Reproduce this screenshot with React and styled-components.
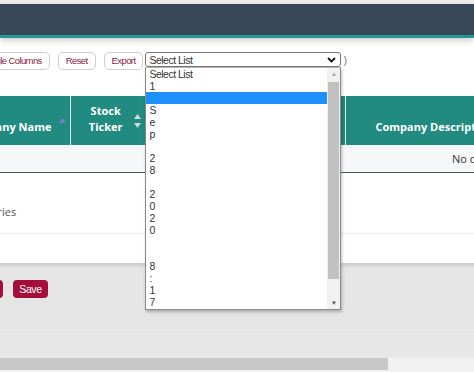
import styled, { createGlobalStyle } from "styled-components";

const GlobalStyle = createGlobalStyle`
  html, body {
    margin: 0;
    padding: 0;
    background: #e5e5e5;
  }
  * { box-sizing: border-box; }
`;

const sans = `"Liberation Sans", Arial, sans-serif`;

const options = ["Select List", "1", "", "S", "e", "p", "", "2", "8", "", "2", "0", "2", "0", "", "", "8", ":", "1", "7"];

function SortBoth() {
  return (
    <svg width="7" height="14" viewBox="0 0 7 14">
      <path d="M3.5 0 L7 5 L0 5 Z" fill="#c9dcda" />
      <path d="M3.5 14 L7 9 L0 9 Z" fill="#c9dcda" />
    </svg>
  );
}

function SortAsc() {
  return (
    <svg width="7" height="5" viewBox="0 0 7 5">
      <path d="M3.5 0 L7 5 L0 5 Z" fill="#7d7ad6" />
    </svg>
  );
}

function Chevron() {
  return (
    <svg width="9" height="6" viewBox="0 0 9 6">
      <path d="M1 1 L4.5 4.5 L8 1" fill="none" stroke="#111" strokeWidth="1.8" />
    </svg>
  );
}

function App() {
  return (
    <Page>
      <GlobalStyle />
      <TopStrip />
      <NavBar />
      <Main>
        <Card>
          <Toolbar>
            <ToolButton>Toggle Columns</ToolButton>
            <ToolButton>Reset</ToolButton>
            <ToolButton>Export</ToolButton>
            <SelectWrap>
              <SelectBox>
                <span>Select List</span>
                <Chevron />
              </SelectBox>
              <Popup>
                <OptionList>
                  {options.map((o, i) => (
                    <Option key={i} $active={i === 2}>{o}</Option>
                  ))}
                </OptionList>
                <PopScroll>
                  <ScrollArrow $dark={false}>▲</ScrollArrow>
                  <PopThumb />
                  <ScrollArrow $dark>▼</ScrollArrow>
                </PopScroll>
              </Popup>
            </SelectWrap>
            <Paren>)</Paren>
          </Toolbar>

          <Table>
            <colgroup>
              <col style={{ width: 150 }} />
              <col style={{ width: 75 }} />
              <col style={{ width: 200 }} />
              <col style={{ width: 215 }} />
            </colgroup>
            <thead>
              <tr>
                <Th>
                  <HeadInner $justify="flex-end" $gap={7}>
                    <HeadText>Company Name</HeadText>
                    <SortAsc />
                  </HeadInner>
                </Th>
                <Th>
                  <HeadInner $justify="flex-end" $gap={11}>
                    <HeadText>Stock<br />Ticker</HeadText>
                    <SortBoth />
                  </HeadInner>
                </Th>
                <Th>
                  <HeadInner $justify="center">
                    <HeadText>Sector</HeadText>
                  </HeadInner>
                </Th>
                <Th>
                  <HeadInner $justify="flex-start">
                    <HeadText>Company Description</HeadText>
                  </HeadInner>
                </Th>
              </tr>
            </thead>
            <tbody>
              <EmptyRow>
                <td />
                <td />
                <td />
                <Td $pad="0 0 0 107px">No description</Td>
              </EmptyRow>
              <DataRow>
                <Td $pad="0 0 0 45px" $valign="bottom">Industries</Td>
                <td />
                <td />
                <td />
              </DataRow>
            </tbody>
          </Table>
          <CardFoot />
        </Card>

        <Actions>
          <SaveButton>Cancel</SaveButton>
          <SaveButton>Save</SaveButton>
        </Actions>
        <Band />
      </Main>
      <HScroll>
        <HThumb />
      </HScroll>
    </Page>
  );
}

const Page = styled.div`
  width: 474px;
  height: 372px;
  overflow: hidden;
  display: flex;
  flex-direction: column;
  background: #e5e5e5;
  font-family: ${sans};
`;

const TopStrip = styled.div`
  height: 4px;
  background: #ececec;
`;

const NavBar = styled.div`
  height: 34px;
  background: #374759;
  border-bottom: 3px solid #27968e;
  box-shadow: 0 3px 6px rgba(0, 0, 0, 0.18);
  position: relative;
  z-index: 2;
`;

const Main = styled.div`
  flex: 1;
  margin-left: -80px;
  width: 660px;
  display: flex;
  flex-direction: column;
`;

const Card = styled.div`
  background: #fff;
  box-shadow: 0 2px 4px rgba(0, 0, 0, 0.15);
  position: relative;
  z-index: 1;
`;

const Toolbar = styled.div`
  display: flex;
  align-items: flex-start;
  gap: 8px;
  padding: 14px 0 0 54px;
  height: 58px;
`;

const ToolButton = styled.button`
  height: 18px;
  padding: 0 7px;
  border: 1px solid #cfcfcf;
  border-radius: 5px;
  background: #fff;
  color: #8b1c42;
  font-family: ${sans};
  font-size: 9.5px;
  letter-spacing: -0.6px;
  line-height: 16px;
  white-space: nowrap;
`;

const SelectWrap = styled.div`
  position: relative;
  width: 196px;
  margin-left: -6px;
`;

const SelectBox = styled.div`
  height: 15px;
  border: 1px solid #767676;
  border-radius: 3px;
  display: flex;
  align-items: center;
  justify-content: space-between;
  padding: 0 4px 0 3px;
  font-size: 10.5px;
  letter-spacing: -0.5px;
  color: #333;
  background: #fff;
`;

const Popup = styled.div`
  position: absolute;
  top: 15px;
  left: 0;
  width: 196px;
  height: 243px;
  background: #fff;
  border: 1px solid #8a8a8a;
  border-top-color: #b5b5b5;
  box-shadow: 1px 2px 3px rgba(0, 0, 0, 0.25);
  display: flex;
  z-index: 5;
`;

const OptionList = styled.div`
  flex: 1;
  display: flex;
  flex-direction: column;
`;

const Option = styled.div`
  height: 12px;
  line-height: 12px;
  font-size: 10.5px;
  letter-spacing: -0.5px;
  color: #333;
  padding-left: 3px;
  background: ${(p) => (p.$active ? "#1e90ff" : "transparent")};
`;

const PopScroll = styled.div`
  width: 13px;
  background: #f1f1f1;
  display: flex;
  flex-direction: column;
  align-items: center;
`;

const ScrollArrow = styled.div`
  height: 12px;
  font-size: 6px;
  line-height: 12px;
  color: ${(p) => (p.$dark ? "#505050" : "#a3a3a3")};
`;

const PopThumb = styled.div`
  flex: 1;
  width: 11px;
  background: #c1c1c1;
  margin-top: 2px;
  margin-bottom: 18px;
`;

const Paren = styled.span`
  margin-left: -6px;
  margin-top: 2px;
  font-size: 11px;
  color: #777;
`;

const Table = styled.table`
  table-layout: fixed;
  border-collapse: collapse;
  width: 640px;
`;

const Th = styled.th`
  height: 49px;
  padding: 0 4px 0 0;
  background: #218a81;
  border-right: 1px solid #e6f2f0;
  color: #fff;
  font-family: "Open Sans", sans-serif;
  font-weight: 700;
  font-size: 11px;
  &:last-child { border-right: none; }
`;

const HeadInner = styled.div`
  height: 49px;
  display: flex;
  align-items: center;
  justify-content: ${(p) => p.$justify};
  gap: ${(p) => p.$gap || 9}px;
  padding-left: ${(p) => (p.$justify === "flex-start" ? "30px" : "0")};
`;

const HeadText = styled.span`
  align-self: flex-end;
  padding-bottom: 10px;
  line-height: 16px;
  text-align: center;
  white-space: nowrap;
`;

const EmptyRow = styled.tr`
  height: 27px;
  background: #f6f7f9;
  border-bottom: 1px solid #555;
`;

const DataRow = styled.tr`
  height: 61px;
  background: #fff;
  border-bottom: 1px solid #ececec;
`;

const Td = styled.td`
  padding: ${(p) => p.$pad};
  vertical-align: ${(p) => p.$valign || "middle"};
  font-family: "Open Sans", sans-serif;
  font-size: 11px;
  color: ${(p) => (p.$valign ? "#555" : "#333")};
  white-space: nowrap;
  padding-bottom: ${(p) => (p.$valign ? "14px" : "0")};
`;

const CardFoot = styled.div`
  height: 29px;
`;

const Actions = styled.div`
  display: flex;
  gap: 10px;
  padding: 17px 0 0 41px;
  height: 66px;
`;

const SaveButton = styled.button`
  height: 18px;
  padding: 0 6px;
  border: none;
  border-radius: 4px;
  background: #a50e3c;
  color: #fff;
  font-family: ${sans};
  font-size: 10.5px;
  letter-spacing: -0.4px;
`;

const Band = styled.div`
  height: 28px;
  background: #e7e7e7;
  border-top: 1px solid #ebebeb;
`;

const HScroll = styled.div`
  height: 15px;
  background: #f1f1f1;
  border-top: 1px solid #e9e9e9;
  padding-bottom: 2px;
`;

const HThumb = styled.div`
  width: 388px;
  height: 12px;
  background: #c8c8c8;
`;

export default App;
